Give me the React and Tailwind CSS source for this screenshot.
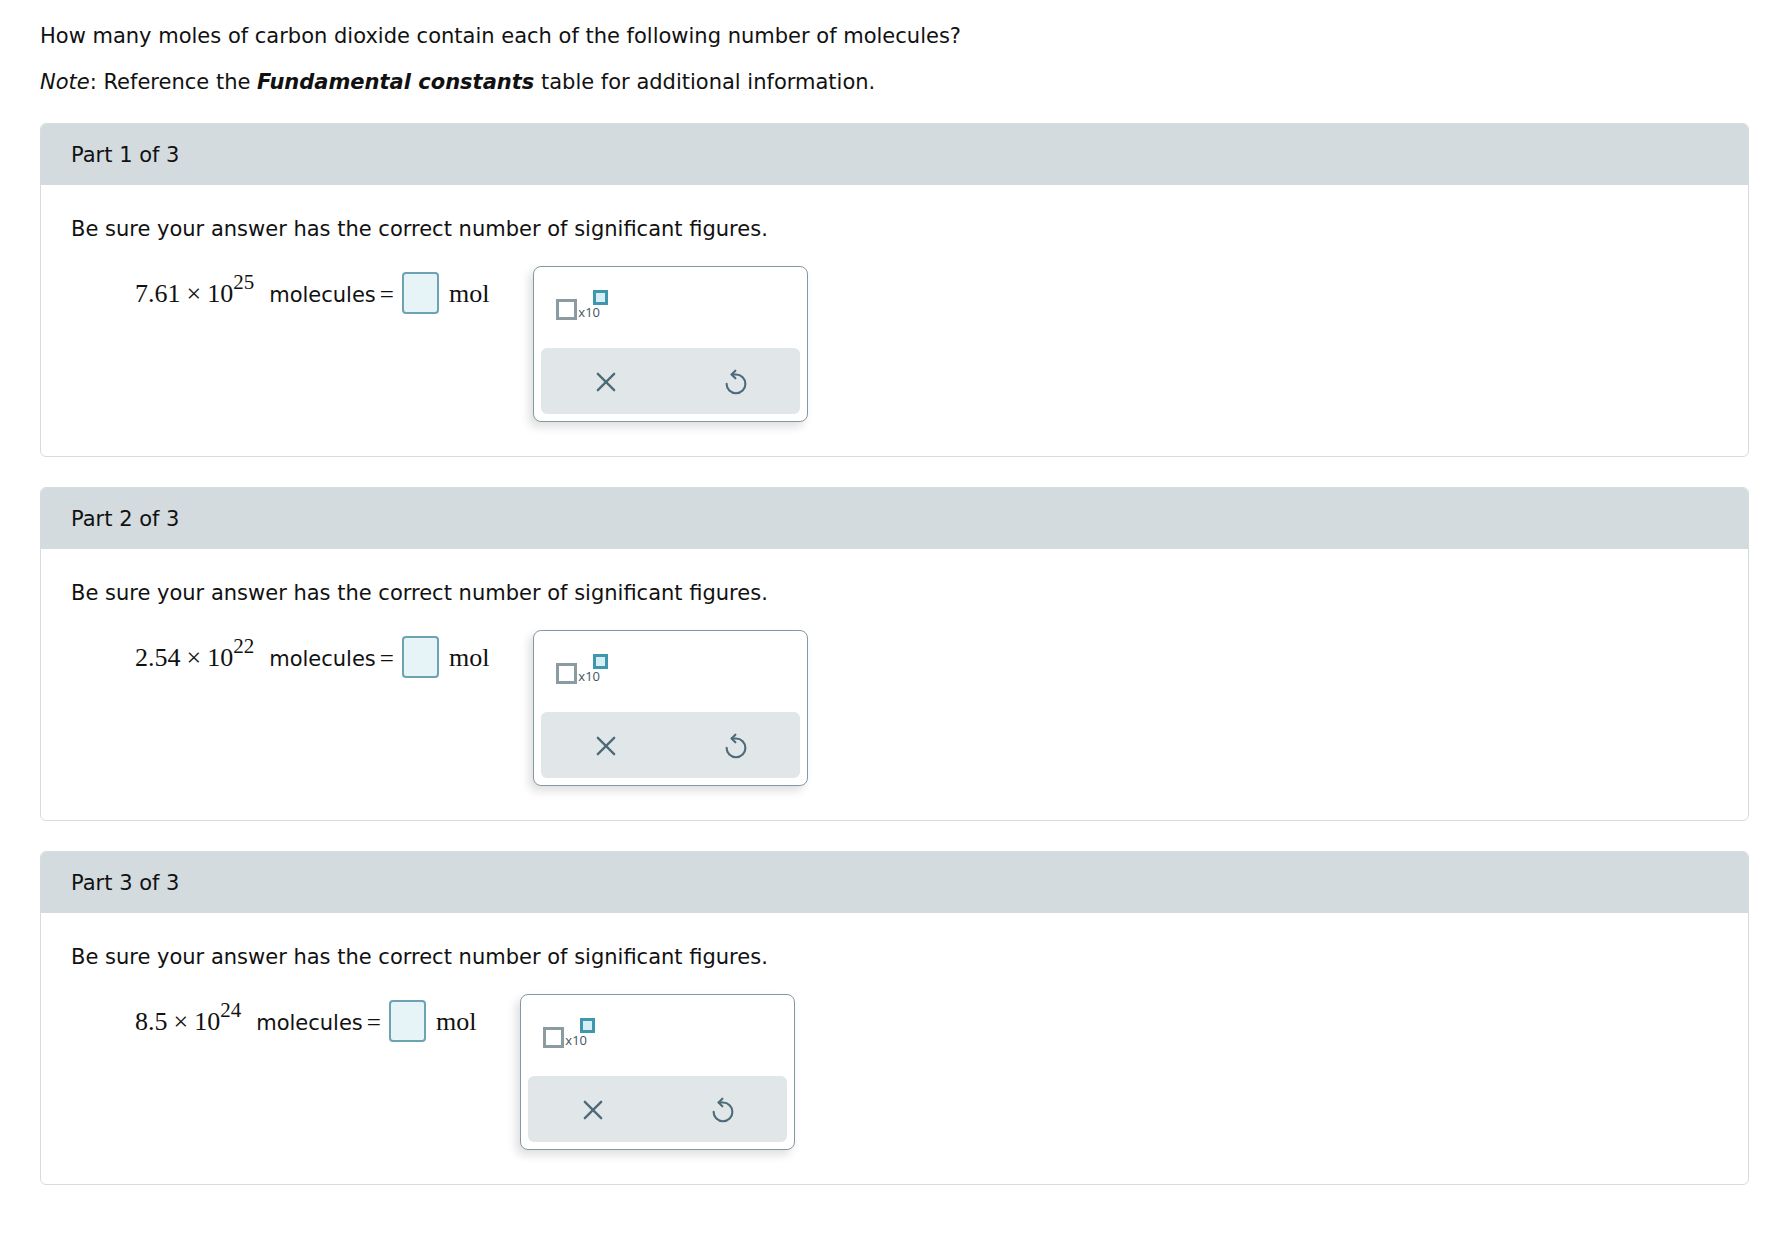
import React from 'react';

const parts = [
  { n: 1, base: '7.61', exp: '25' },
  { n: 2, base: '2.54', exp: '22' },
  { n: 3, base: '8.5', exp: '24' },
];

const UndoIcon = () => (
  <svg width="30" height="30" viewBox="0 0 24 24" fill="none" stroke="#4d6b78" strokeWidth="1.7" strokeLinecap="round" strokeLinejoin="round">
    <path d="M11.5 3 L8.5 6 L11.5 9" />
    <path d="M8.5 6 H12 A7.5 7.5 0 1 1 4.5 13.5" />
  </svg>
);

const CloseIcon = () => (
  <svg width="28" height="28" viewBox="0 0 24 24" fill="none" stroke="#4d6b78" strokeWidth="2" strokeLinecap="round">
    <path d="M5 5 L19 19" />
    <path d="M19 5 L5 19" />
  </svg>
);

const AnswerTools = () => (
  <div className="ml-[44px] w-[275px] h-[156px] rounded-lg border border-[#8399a2] bg-white shadow-[-4px_5px_10px_rgba(0,0,0,0.13)] flex flex-col">
    <div className="flex-1 relative">
      <div className="absolute left-[22px] top-[32px] w-[21px] h-[21px] border-[3px] border-[#8a9ba2] bg-white" />
      <span className="absolute left-[44px] top-[39px] text-[13px] leading-none text-[#3f555e] font-['Open_Sans',sans-serif]">x10</span>
      <div className="absolute left-[59px] top-[23px] w-[15px] h-[15px] border-[3px] border-[#3f97ad] bg-[#d6eef5]" />
    </div>
    <div className="mx-[7px] mb-[7px] h-[66px] rounded-md bg-[#e1e6e9] flex items-center">
      <div className="flex-1 flex justify-center pt-[2px]"><CloseIcon /></div>
      <div className="flex-1 flex justify-center pt-[2px]"><UndoIcon /></div>
    </div>
  </div>
);

const Part = ({ n, base, exp }) => (
  <div className="rounded-md border border-[#d6dbde] overflow-hidden mt-[30px] first:mt-0">
    <div className="h-[61px] bg-[#d3dbdf] flex items-center pl-[30px] pt-[3px] text-[21px]">
      Part {n} of 3
    </div>
    <div className="pl-[30px] pt-[31px] pb-[34px]">
      <div className="text-[21px] leading-[24px] pt-[1px]">Be sure your answer has the correct number of significant figures.</div>
      <div className="flex items-start mt-[25px]">
        <div className="ml-[64px] mt-[6px] flex items-center h-[42px]">
          <span className="font-['Liberation_Serif',serif] text-[26px] leading-none whitespace-nowrap relative top-[1px]">
            {base}<span className="mx-[6px]">×</span>10<span className="text-[21px] relative top-[-13px]">{exp}</span>
          </span>
          <span className="ml-[15px] text-[21px] relative top-[3px]">molecules</span>
          <span className="ml-[4px] font-['Liberation_Serif',serif] text-[25px] relative top-[2px]">=</span>
          <div className="ml-[8px] w-[37px] h-[42px] rounded-[4px] border-2 border-[#6ba3b3] bg-[#e6f4f8]" />
          <span className="ml-[10px] font-['Liberation_Serif',serif] text-[26px]">mol</span>
        </div>
        <AnswerTools />
      </div>
    </div>
  </div>
);

export default function App() {
  return (
    <div className="min-h-screen bg-white text-[#111] font-['DejaVu_Sans',Verdana,sans-serif] pl-[40px] pr-[35px] pt-[24px] pb-[40px]">
      <p className="text-[21px] leading-[24px]">How many moles of carbon dioxide contain each of the following number of molecules?</p>
      <p className="text-[21px] leading-[24px] mt-[22px]">
        <i>Note</i>: Reference the <b><i>Fundamental constants</i></b> table for additional information.
      </p>
      <div className="mt-[29px]">
        {parts.map((p) => (
          <Part key={p.n} {...p} />
        ))}
      </div>
    </div>
  );
}
